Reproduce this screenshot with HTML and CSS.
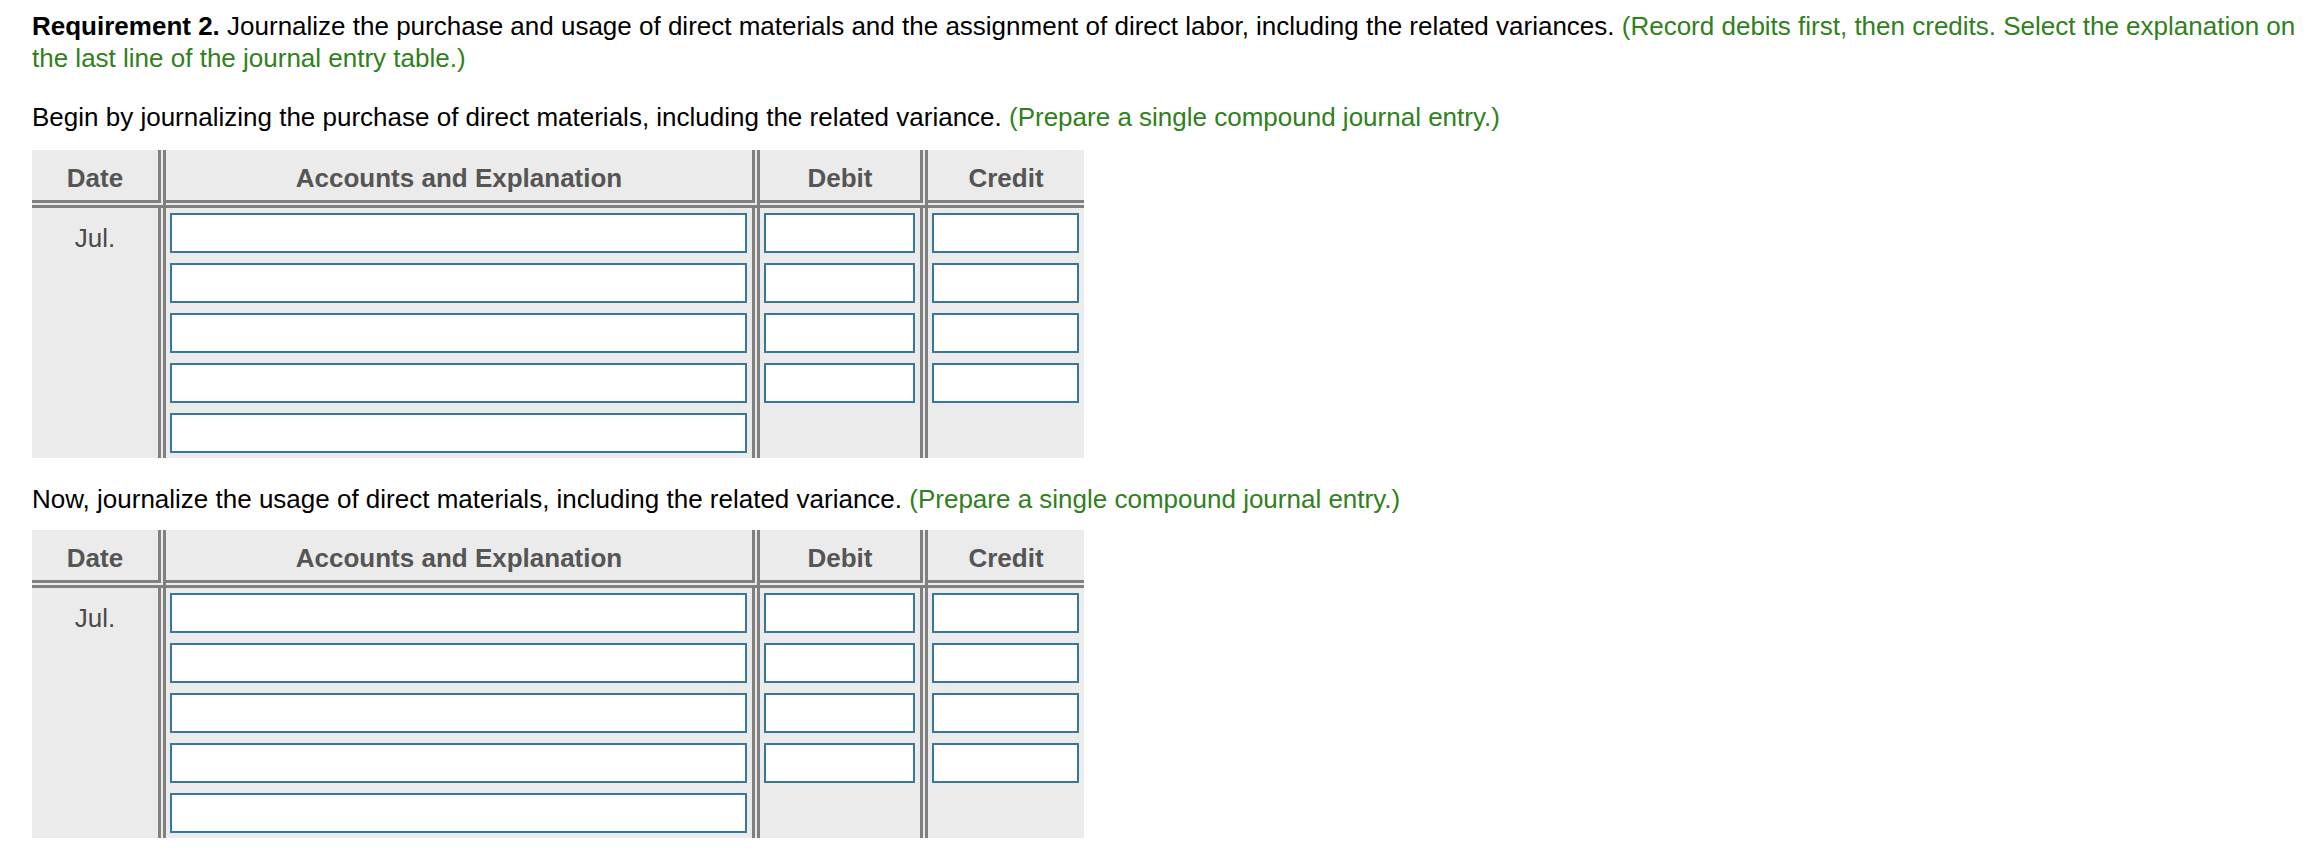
FILE: index.html
```html
<!DOCTYPE html>
<html lang="en">

<head>
    <meta charset="UTF-8">
    <meta name="viewport" content="width=device-width, initial-scale=1.0">

    <link rel="stylesheet" href="styles.css">
    <title>Requirement 2</title>
</head>

<body>

    <div class="page">
        <p class="req"><b>Requirement 2.</b> Journalize the purchase and usage of direct materials and the assignment of direct labor, including the related variances. <span class="hint">(Record debits first, then credits. Select the explanation on the last line of the journal entry table.)</span></p>

        <!-- purchase of materials -->
        <p class="lead">Begin by journalizing the purchase of direct materials, including the related variance. <span class="hint">(Prepare a single compound journal entry.)</span></p>

        <table class="journal">
            <thead>
                <tr>
                    <th class="c-date">Date</th>
                    <th class="c-acct">Accounts and Explanation</th>
                    <th class="c-debit">Debit</th>
                    <th class="c-credit">Credit</th>
                </tr>
            </thead>
            <tbody>
                <tr>
                    <td class="date" rowspan="5">Jul.</td>
                    <td class="acct"><input type="text"></td>
                    <td class="amt"><input type="text"></td>
                    <td class="amt last"><input type="text"></td>
                </tr>
                <tr>
                    <td class="acct"><input type="text"></td>
                    <td class="amt"><input type="text"></td>
                    <td class="amt last"><input type="text"></td>
                </tr>
                <tr>
                    <td class="acct"><input type="text"></td>
                    <td class="amt"><input type="text"></td>
                    <td class="amt last"><input type="text"></td>
                </tr>
                <tr>
                    <td class="acct"><input type="text"></td>
                    <td class="amt"><input type="text"></td>
                    <td class="amt last"><input type="text"></td>
                </tr>
                <tr>
                    <td class="acct"><input type="text"></td>
                    <td class="amt"></td>
                    <td class="amt last"></td>
                </tr>
            </tbody>
        </table>

        <!-- usage of materials -->
        <p class="lead">Now, journalize the usage of direct materials, including the related variance. <span class="hint">(Prepare a single compound journal entry.)</span></p>

        <table class="journal">
            <thead>
                <tr>
                    <th class="c-date">Date</th>
                    <th class="c-acct">Accounts and Explanation</th>
                    <th class="c-debit">Debit</th>
                    <th class="c-credit">Credit</th>
                </tr>
            </thead>
            <tbody>
                <tr>
                    <td class="date" rowspan="5">Jul.</td>
                    <td class="acct"><input type="text"></td>
                    <td class="amt"><input type="text"></td>
                    <td class="amt last"><input type="text"></td>
                </tr>
                <tr>
                    <td class="acct"><input type="text"></td>
                    <td class="amt"><input type="text"></td>
                    <td class="amt last"><input type="text"></td>
                </tr>
                <tr>
                    <td class="acct"><input type="text"></td>
                    <td class="amt"><input type="text"></td>
                    <td class="amt last"><input type="text"></td>
                </tr>
                <tr>
                    <td class="acct"><input type="text"></td>
                    <td class="amt"><input type="text"></td>
                    <td class="amt last"><input type="text"></td>
                </tr>
                <tr>
                    <td class="acct"><input type="text"></td>
                    <td class="amt"></td>
                    <td class="amt last"></td>
                </tr>
            </tbody>
        </table>
    </div>

</body>

</html>
```

FILE: styles.css
```css
body {
    margin: 8px;
    background-color: #ffffff;
    font-family: "Liberation Sans", Arial, Helvetica, sans-serif;
    font-size: 26px;
    line-height: 32px;
    color: #000000;
}

.page {
    padding: 2px 0 0 24px;
}

p {
    margin: 0;
}

.lead {
    margin-top: 27px;
}

.hint {
    color: rgb(48, 128, 32);
}

.journal {
    margin-top: 17px;
    border-collapse: separate;
    border-spacing: 0;
    table-layout: fixed;
    width: 1052px;
    background-color: #ebebeb;
}

.journal + .lead {
    margin-top: 25px;
}

.journal + .lead + .journal {
    margin-top: 15px;
}

.journal th {
    box-sizing: border-box;
    padding: 7px 0 0 0;
    line-height: 43px;
    font-weight: bold;
    color: #555555;
    text-align: center;
    border-bottom: 8px double #808080;
    border-right: 8px double #808080;
}

.journal .c-date {
    width: 134px;
}

.journal .c-acct {
    width: 594px;
}

.journal .c-debit {
    width: 168px;
}

.journal .c-credit {
    width: 156px;
    border-right: none;
}

.journal td {
    padding: 5px 5px 5px 4px;
    border-right: 8px double #808080;
    vertical-align: top;
}

.journal td.last {
    border-right: none;
}

.journal td.date {
    padding: 14px 0 0 0;
    text-align: center;
    color: #4a4a4a;
}

.journal input {
    display: block;
    box-sizing: border-box;
    width: 100%;
    height: 40px;
    margin: 0;
    border: 2px solid #36789b;
    background-color: #ffffff;
    font-family: inherit;
    font-size: 22px;
}
```
